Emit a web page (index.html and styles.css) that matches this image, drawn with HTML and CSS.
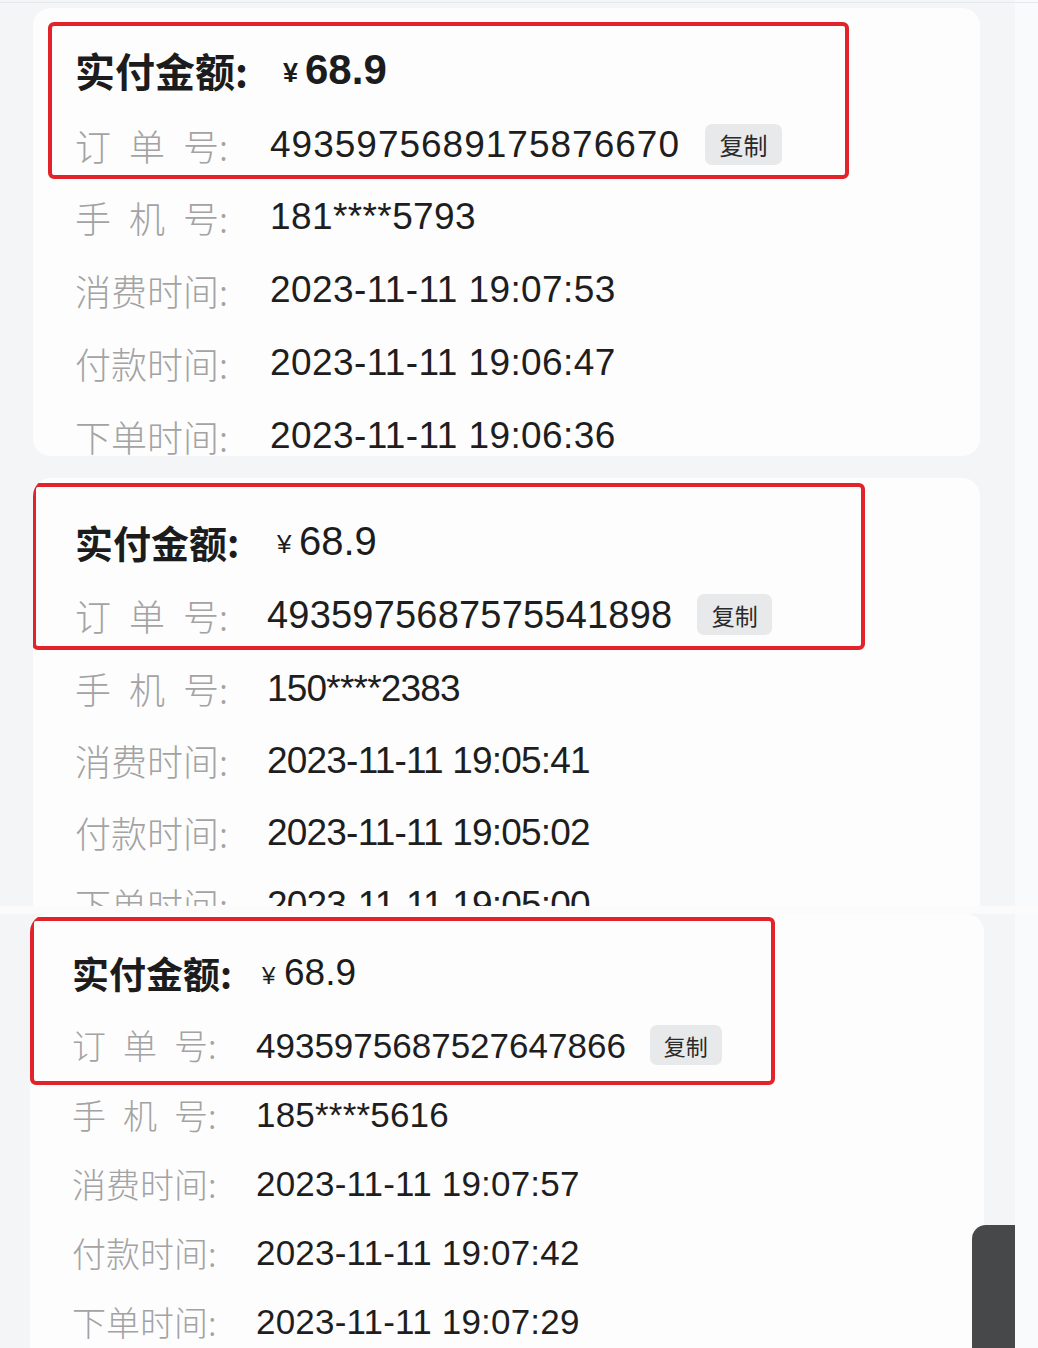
FILE: index.html
```html
<!DOCTYPE html>
<html lang="zh-CN">
<head>
    <meta charset="UTF-8">
    <meta name="viewport" content="width=device-width, initial-scale=1.0">
    <title>订单详情</title>
    <link rel="stylesheet" href="styles.css">
</head>
<body>
    <div class="page">
        <div class="shot shot-a">
            <div class="rule"></div>
            <div class="card">
                <div class="mark">
                    <div class="title-row">
                        <span class="title">实付金额:</span>
                        <span class="yen">¥</span><span class="amount">68.9</span>
                    </div>
                    <div class="row row-order">
                        <span class="lbl"><span class="lbl-t">订单号</span>:</span>
                        <span class="val">4935975689175876670</span>
                        <button class="copy">复制</button>
                    </div>
                </div>
                <div class="row"><span class="lbl"><span class="lbl-t">手机号</span>:</span><span class="val">181****5793</span></div>
                <div class="row"><span class="lbl"><span class="lbl-t">消费时间</span>:</span><span class="val">2023-11-11 19:07:53</span></div>
                <div class="row"><span class="lbl"><span class="lbl-t">付款时间</span>:</span><span class="val">2023-11-11 19:06:47</span></div>
                <div class="row"><span class="lbl"><span class="lbl-t">下单时间</span>:</span><span class="val">2023-11-11 19:06:36</span></div>
            </div>
        </div>

        <div class="shot shot-b">
            <div class="card">
                <div class="mark">
                    <div class="title-row">
                        <span class="title">实付金额:</span>
                        <span class="yen">¥</span><span class="amount">68.9</span>
                    </div>
                    <div class="row row-order">
                        <span class="lbl"><span class="lbl-t">订单号</span>:</span>
                        <span class="val">4935975687575541898</span>
                        <button class="copy">复制</button>
                    </div>
                </div>
                <div class="row"><span class="lbl"><span class="lbl-t">手机号</span>:</span><span class="val">150****2383</span></div>
                <div class="row"><span class="lbl"><span class="lbl-t">消费时间</span>:</span><span class="val">2023-11-11 19:05:41</span></div>
                <div class="row"><span class="lbl"><span class="lbl-t">付款时间</span>:</span><span class="val">2023-11-11 19:05:02</span></div>
                <div class="row"><span class="lbl"><span class="lbl-t">下单时间</span>:</span><span class="val">2023-11-11 19:05:00</span></div>
            </div>
        </div>

        <div class="shot shot-c">
            <div class="card">
                <div class="mark">
                    <div class="title-row">
                        <span class="title">实付金额:</span>
                        <span class="yen">¥</span><span class="amount">68.9</span>
                    </div>
                    <div class="row row-order">
                        <span class="lbl"><span class="lbl-t">订单号</span>:</span>
                        <span class="val">4935975687527647866</span>
                        <button class="copy">复制</button>
                    </div>
                </div>
                <div class="row"><span class="lbl"><span class="lbl-t">手机号</span>:</span><span class="val">185****5616</span></div>
                <div class="row"><span class="lbl"><span class="lbl-t">消费时间</span>:</span><span class="val">2023-11-11 19:07:57</span></div>
                <div class="row"><span class="lbl"><span class="lbl-t">付款时间</span>:</span><span class="val">2023-11-11 19:07:42</span></div>
                <div class="row"><span class="lbl"><span class="lbl-t">下单时间</span>:</span><span class="val">2023-11-11 19:07:29</span></div>
            </div>
            <div class="scroll-thumb"></div>
        </div>
    </div>
</body>
</html>
```

FILE: styles.css
```css
body {
    margin: 0;
    padding: 0;
    background-color: #f4f5f7;
    font-family: "Liberation Sans", "Noto Sans CJK SC", sans-serif;
    color: #222;
}
.page {
    width: 1038px;
    height: 1348px;
    overflow: hidden;
    position: relative;
    background: linear-gradient(to right, #f4f5f7 0, #f4f5f7 1015px, #f9fafb 1015px);
}
.shot {
    overflow: hidden;
    position: relative;
}
.rule {
    height: 1px;
    margin-top: 2px;
    background: #e7e8eb;
}
.card {
    background: #fdfdfe;
    border-radius: 18px;
    overflow: hidden;
}
.mark {
    box-sizing: border-box;
    border: 4px solid #e2242a;
    border-radius: 6px;
}
.title-row {
    display: flex;
    align-items: center;
    white-space: nowrap;
}
.title {
    font-family: "Noto Sans CJK SC", sans-serif;
    font-weight: bold;
    color: #1c1c1c;
}
.yen {
    font-weight: bold;
    color: #1c1c1c;
}
.amount {
    color: #1c1c1c;
}
.row {
    display: flex;
    align-items: center;
    white-space: nowrap;
    line-height: 1;
}
.lbl {
    display: flex;
    align-items: center;
    flex-shrink: 0;
    font-family: "Noto Sans CJK SC", sans-serif;
    font-weight: 300;
    color: #a3a3a3;
}
.lbl-t {
    width: 4em;
    text-align: justify;
    text-align-last: justify;
}
.val {
    color: #1e1e1e;
}
.copy {
    font-family: "Noto Sans CJK SC", sans-serif;
    background: #e8e9eb;
    color: #2a2a2a;
    border: none;
    border-radius: 7px;
    padding: 0;
    cursor: pointer;
}

/* first screenshot */
.shot-a {
    height: 478px;
}
.shot-a .card {
    margin: 5px 0 0 33px;
    width: 947px;
    height: 448px;
}
.shot-a .mark {
    margin: 14px 0 0 15px;
    width: 801px;
    height: 157px;
    padding-left: 23px;
}
.shot-a .title-row {
    height: 88px;
}
.shot-a .title {
    font-size: 40px;
    width: 208px;
}
.shot-a .yen {
    font-size: 27px;
    margin-top: 6px;
    width: 22px;
}
.shot-a .amount {
    font-size: 42px;
    font-weight: bold;
}
.shot-a .row {
    height: 73px;
    padding-left: 42px;
    font-size: 37px;
}
.shot-a .mark .row {
    height: 61px;
    padding-left: 0;
}
.shot-a .mark + .row {
    margin-top: 1px;
}
.shot-a .lbl {
    width: 195px;
    font-size: 36px;
}
.shot-a .val {
    font-size: 37px;
    letter-spacing: 0.4px;
}
.shot-a .mark .val {
    letter-spacing: 1px;
}
.shot-a .copy {
    margin-left: 25px;
    width: 77px;
    height: 41px;
    font-size: 24px;
}

/* second screenshot */
.shot-b {
    height: 428px;
}
.shot-b .card {
    margin-left: 33px;
    width: 947px;
    height: 428px;
    border-radius: 18px 18px 0 0;
}
.shot-b .mark {
    margin: 5px 0 0 -1px;
    width: 833px;
    height: 167px;
    padding-left: 39px;
}
.shot-b .title-row {
    height: 104px;
    padding-top: 4px;
    box-sizing: border-box;
}
.shot-b .title {
    font-size: 38px;
    width: 202px;
}
.shot-b .yen {
    font-size: 26px;
    font-weight: normal;
    margin-top: 6px;
    width: 22px;
}
.shot-b .amount {
    font-size: 40px;
}
.shot-b .row {
    height: 72px;
    padding-left: 42px;
}
.shot-b .mark .row {
    height: 55px;
    padding-left: 0;
    padding-bottom: 8px;
    box-sizing: border-box;
}
.shot-b .mark + .row {
    margin-top: 2px;
}
.shot-b .lbl {
    width: 192px;
    font-size: 36px;
}
.shot-b .val {
    font-size: 37px;
    letter-spacing: -0.8px;
}
.shot-b .mark .val {
    font-size: 38px;
    letter-spacing: 0.2px;
}
.shot-b .copy {
    margin-left: 25px;
    width: 75px;
    height: 41px;
    font-size: 23px;
}

/* third screenshot */
.shot-c {
    height: 442px;
    background: linear-gradient(to bottom, #fbfbfc 0, #fbfbfc 8px, transparent 8px);
}
.shot-c .card {
    margin: 8px 0 0 30px;
    width: 954px;
    height: 434px;
    border-radius: 18px 18px 0 0;
}
.shot-c .mark {
    margin-top: 3px;
    width: 745px;
    height: 168px;
    padding-left: 38px;
}
.shot-c .title-row {
    height: 96px;
    padding-top: 8px;
    box-sizing: border-box;
}
.shot-c .title {
    font-size: 37px;
    width: 190px;
}
.shot-c .yen {
    font-size: 24px;
    font-weight: normal;
    margin-top: 6px;
    width: 22px;
}
.shot-c .amount {
    font-size: 37px;
}
.shot-c .row {
    height: 69px;
    padding-left: 42px;
    padding-bottom: 10px;
    box-sizing: border-box;
}
.shot-c .mark .row {
    height: 64px;
    padding-left: 0;
    padding-bottom: 8px;
}
.shot-c .lbl {
    width: 184px;
    font-size: 34px;
}
.shot-c .val {
    font-size: 35px;
    letter-spacing: 0.2px;
}
.shot-c .mark .val {
    letter-spacing: 0;
}
.shot-c .copy {
    margin-left: 24px;
    width: 72px;
    height: 40px;
    font-size: 22px;
}
.scroll-thumb {
    position: absolute;
    left: 972px;
    top: 319px;
    width: 43px;
    height: 140px;
    background: #47484a;
    border-radius: 14px 0 0 0;
}
```
